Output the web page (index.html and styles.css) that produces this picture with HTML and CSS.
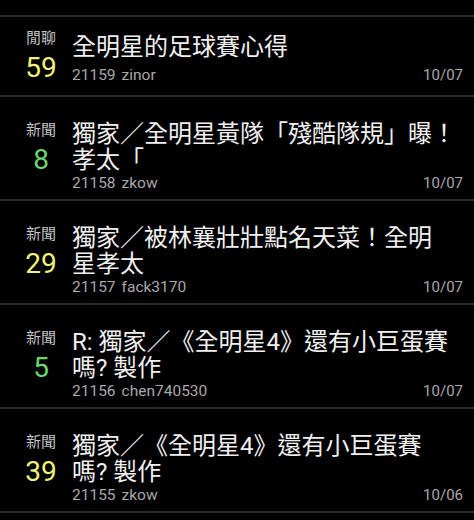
FILE: index.html
```html
<!DOCTYPE html>
<html lang="zh-Hant">
<head>
    <meta charset="UTF-8">
    <meta name="viewport" content="width=device-width, initial-scale=1.0">
    <title>看板文章列表</title>
    <link rel="stylesheet" href="styles.css">
</head>
<body>
    <ul class="topic-list">
        <li class="topic topic-short">
            <div class="topic-side">
                <span class="topic-kind">閒聊</span>
                <span class="topic-count count-hot">59</span>
            </div>
            <div class="topic-body">
                <div class="topic-title">全明星的足球賽心得</div>
                <div class="topic-meta"><span>21159</span><span class="topic-author">zinor</span><span class="topic-date">10/07</span></div>
            </div>
        </li>
        <li class="topic">
            <div class="topic-side">
                <span class="topic-kind">新聞</span>
                <span class="topic-count count-new">8</span>
            </div>
            <div class="topic-body">
                <div class="topic-title">獨家／全明星黃隊「殘酷隊規」曝！<br>孝太「</div>
                <div class="topic-meta"><span>21158</span><span class="topic-author">zkow</span><span class="topic-date">10/07</span></div>
            </div>
        </li>
        <li class="topic">
            <div class="topic-side">
                <span class="topic-kind">新聞</span>
                <span class="topic-count count-hot">29</span>
            </div>
            <div class="topic-body">
                <div class="topic-title">獨家／被林襄壯壯點名天菜！全明<br>星孝太</div>
                <div class="topic-meta"><span>21157</span><span class="topic-author">fack3170</span><span class="topic-date">10/07</span></div>
            </div>
        </li>
        <li class="topic">
            <div class="topic-side">
                <span class="topic-kind">新聞</span>
                <span class="topic-count count-new">5</span>
            </div>
            <div class="topic-body">
                <div class="topic-title">R: 獨家／《全明星4》還有小巨蛋賽<br>嗎? 製作</div>
                <div class="topic-meta"><span>21156</span><span class="topic-author">chen740530</span><span class="topic-date">10/07</span></div>
            </div>
        </li>
        <li class="topic">
            <div class="topic-side">
                <span class="topic-kind">新聞</span>
                <span class="topic-count count-hot">39</span>
            </div>
            <div class="topic-body">
                <div class="topic-title">獨家／《全明星4》還有小巨蛋賽<br>嗎? 製作</div>
                <div class="topic-meta"><span>21155</span><span class="topic-author">zkow</span><span class="topic-date">10/06</span></div>
            </div>
        </li>
    </ul>
</body>
</html>
```

FILE: styles.css
```css
body {
    margin: 0;
    background-color: #000;
    color: #f0f0f0;
    font-family: Roboto, "Noto Sans CJK TC", sans-serif;
}
.topic-list {
    list-style: none;
    margin: 15px 0 0;
    padding: 0;
    border-top: 2px solid #2c2c2c;
}
.topic {
    display: flex;
    padding: 0 11px 0 16px;
    border-bottom: 2px solid #2c2c2c;
}
.topic-side {
    width: 50px;
    align-self: center;
    display: flex;
    flex-direction: column;
    align-items: center;
}
.topic-kind {
    font-size: 15px;
    line-height: 17px;
    color: #c4c4c4;
}
.topic-count {
    margin-top: 7px;
    font-size: 28px;
    line-height: 28px;
}
.count-hot {
    color: #f2f27c;
}
.count-new {
    color: #6cd86c;
}
.topic-body {
    flex: 1;
    min-width: 0;
    margin-left: 6px;
    padding: 24px 0 6px;
}
.topic-short .topic-body {
    padding: 17px 0 10px;
}
.topic-title {
    font-size: 24px;
    line-height: 26px;
    white-space: nowrap;
}
.topic-meta {
    display: flex;
    font-size: 15.5px;
    line-height: 20px;
    color: #a9a9a9;
}
.topic-author {
    margin-left: 6px;
}
.topic-date {
    margin-left: auto;
    font-size: 15px;
}
.topic-short .topic-meta {
    margin-top: 5px;
}
```
